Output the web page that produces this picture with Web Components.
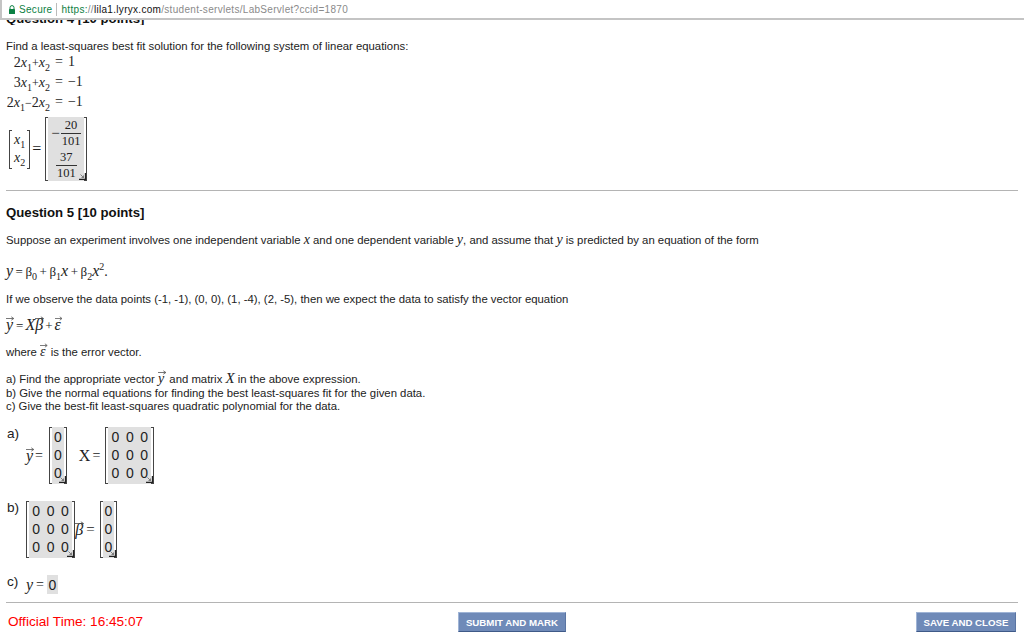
<!DOCTYPE html>
<html>
<head>
<meta charset="utf-8">
<style>
  html, body { margin: 0; padding: 0; background: #fff; }
  body { width: 1024px; height: 640px; overflow: hidden; font-family: "Liberation Sans", Arial, sans-serif; color: #222; }
  i.m, span.m { font-family: "Liberation Serif", serif; font-size: 14px; color: #222; }
  i.m { font-style: italic; }
  i.big { font-size: 16px; }
  span.n { font-size: 13px; }
  span.s { font-size: 12px; }
  span.op { margin: 0 2.5px; }
  sub, sup { font-size: 10px; line-height: 0; font-family: "Liberation Serif", serif; }
</style>
</head>
<body>
<quiz-page>
  <browser-bar></browser-bar>

  <clip-top><quiz-heading style="margin-top:-9px">Question 4 [10 points]</quiz-heading></clip-top>
  <quiz-text style="margin-top:14px">Find a least-squares best fit solution for the following system of linear equations:</quiz-text>
  <eq-system style="margin-top:-1px">
    <span class="r"><span class="m">2</span><i class="m">x</i><sub>1</sub><span class="m s">+</span><i class="m">x</i><sub>2</sub></span><span class="m">=</span><span class="m">1</span>
    <span class="r"><span class="m">3</span><i class="m">x</i><sub>1</sub><span class="m s">+</span><i class="m">x</i><sub>2</sub></span><span class="m">=</span><span class="m">−1</span>
    <span class="r"><span class="m">2</span><i class="m">x</i><sub>1</sub><span class="m s">−</span><span class="m">2</span><i class="m">x</i><sub>2</sub></span><span class="m">=</span><span class="m">−1</span>
  </eq-system>
  <math-row style="margin:5px 0 0 3px">
    <math-matrix plain rowh="18">
      <span><i class="m">x</i><sub>1</sub></span>
      <span><i class="m">x</i><sub>2</sub></span>
    </math-matrix>
    <span class="m" style="font-size:16px;margin:0 4px 0 2px">=</span>
    <math-matrix rowh="30.5" pad="3">
      <span style="display:flex;align-items:center"><span class="m" style="font-size:15px;margin-right:1px">−</span><math-frac><span slot="top">20</span><span slot="bottom">101</span></math-frac></span>
      <span><math-frac><span slot="top">37</span><span slot="bottom">101</span></math-frac></span>
    </math-matrix>
  </math-row>
  <quiz-rule style="margin-top:9px"></quiz-rule>

  <quiz-heading style="margin-top:14px">Question 5 [10 points]</quiz-heading>
  <quiz-text style="margin-top:12px">Suppose an experiment involves one independent variable <i class="m">x</i> and one dependent variable <i class="m">y</i>, and assume that <i class="m">y</i> is predicted by an equation of the form</quiz-text>
  <math-line style="margin-top:16px"><i class="m big">y</i><span class="m n op">=</span><span class="m n">β<sub>0</sub></span><span class="m n op">+</span><span class="m n">β<sub>1</sub></span><i class="m big">x</i><span class="m n op">+</span><span class="m n">β<sub>2</sub></span><i class="m big">x</i><sup>2</sup><span class="m">.</span></math-line>
  <quiz-text style="margin-top:13px">If we observe the data points (-1, -1), (0, 0), (1, -4), (2, -5), then we expect the data to satisfy the vector equation</quiz-text>
  <math-line style="margin-top:11px"><math-vec>y</math-vec><span class="m n" style="margin:0 2px">=</span><i class="m big">X</i><math-vec>β</math-vec><span class="m n" style="margin:0 2px 0 1px">+</span><math-vec>ε</math-vec></math-line>
  <quiz-text style="margin-top:11px">where <math-vec small>ε</math-vec> is the error vector.</quiz-text>
  <quiz-text style="margin-top:11px;line-height:13px">a) Find the appropriate vector <math-vec small>y</math-vec> and matrix <i class="m" style="font-size:15px">X</i> in the above expression.<br>b) Give the normal equations for finding the best least-squares fit for the given data.<br>c) Give the best-fit least-squares quadratic polynomial for the data.</quiz-text>

  <answer-part label="a)" style="margin-top:14px">
    <math-row>
      <math-vec>y</math-vec><span class="m" style="margin:0 6px 0 1px">=</span>
      <math-matrix><span>0</span><span>0</span><span>0</span></math-matrix>
      <span class="m" style="font-size:16px;margin-left:12px">X</span><span class="m" style="margin:0 5px 0 2px">=</span>
      <math-matrix cols="3"><span>0</span><span>0</span><span>0</span><span>0</span><span>0</span><span>0</span><span>0</span><span>0</span><span>0</span></math-matrix>
    </math-row>
  </answer-part>
  <answer-part label="b)" style="margin-top:17px">
    <math-row>
      <math-matrix cols="3"><span>0</span><span>0</span><span>0</span><span>0</span><span>0</span><span>0</span><span>0</span><span>0</span><span>0</span></math-matrix>
      <math-vec>β</math-vec><span class="m" style="margin:0 5px 0 2px;font-size:15px">=</span>
      <math-matrix><span>0</span><span>0</span><span>0</span></math-matrix>
    </math-row>
  </answer-part>
  <answer-part label="c)" style="margin-top:17px">
    <math-row style="height:19px">
      <i class="m big">y</i><span class="m" style="margin:0 3px 0 3px">=</span><answer-box>0</answer-box>
    </math-row>
  </answer-part>

  <quiz-rule style="margin-top:8px"></quiz-rule>
  <quiz-footer time="16:45:07"></quiz-footer>
</quiz-page>

<script>
function define(name, css, html, extra) {
  const template = document.createElement('template');
  template.innerHTML = `<style>${css}</style>${html}`;
  class Comp extends HTMLElement {
    constructor() {
      super();
      this.attachShadow({ mode: 'open' });
      this.shadowRoot.appendChild(template.content.cloneNode(true));
    }
    connectedCallback() {
      if (extra) extra(this);
    }
  }
  customElements.define(name, Comp);
}

define('quiz-page', `
  :host { display: block; height: 640px; overflow: hidden; padding: 0 6px; box-sizing: border-box; }
`, `<slot></slot>`);

define('browser-bar', `
  :host {
    margin: 0 -6px; height: 20px; box-sizing: border-box;
    background: #fff; border: 0 solid #c4c4c4; border-width: 0 0 2px 2px;
    display: flex; align-items: center; padding-left: 6px;
    font: 10px "Liberation Sans", Arial, sans-serif; letter-spacing: .3px; color: #8a8a8a;
  }
  svg { margin-right: 3px; }
  .secure { color: #0b8043; }
  .sep { width: 1px; height: 13px; background: #bbb; margin: 0 5px 0 3px; }
  .host { color: #111; }
`, `
  <svg width="8" height="9" viewBox="0 0 8 9"><path d="M2 4V2.6a2 2 0 0 1 4 0V4" fill="none" stroke="#0b8043" stroke-width="1"/><rect x="1" y="4" width="6" height="5" rx=".5" fill="#0b8043"/></svg>
  <span class="secure">Secure</span><span class="sep"></span>
  <span><span class="secure">https:</span>//<span class="host">lila1.lyryx.com</span>/student-servlets/LabServlet?ccid=1870</span>
`);

// the question above is scrolled away, only its lower edge shows under the bar
define('clip-top', `
  :host { display: block; height: 5px; overflow: hidden; }
`, `<slot></slot>`);

define('quiz-heading', `
  :host { display: block; font: bold 13.2px/16px "Liberation Sans", Arial, sans-serif; color: #111; }
`, `<slot></slot>`);

define('quiz-text', `
  :host { display: block; font: 11.35px/14px "Liberation Sans", Arial, sans-serif; color: #222; }
`, `<slot></slot>`);

define('quiz-rule', `
  :host { display: block; height: 1px; background: #b4b4b4; }
`, ``);

define('math-line', `
  :host { display: block; line-height: 16px; height: 16px; white-space: nowrap; }
`, `<slot></slot>`);

define('math-row', `
  :host { display: flex; align-items: center; }
`, `<slot></slot>`);

define('eq-system', `
  :host { display: grid; grid-template-columns: 42px auto auto; grid-auto-rows: 20px; align-items: center; column-gap: 5px; padding-left: 2px; justify-content: start; }
  ::slotted(.r) { justify-self: end; white-space: nowrap; }
`, `<slot></slot>`);

define('math-frac', `
  :host { display: inline-flex; flex-direction: column; align-items: stretch; text-align: center; font: 12.5px/14px "Liberation Serif", serif; color: #222; }
  .top { border-bottom: 1px solid #333; padding: 0 0 1px; }
  .bottom { padding: 0 1px; }
`, `<div class="top"><slot name="top"></slot></div><div class="bottom"><slot name="bottom"></slot></div>`);

define('math-vec', `
  :host { display: inline-block; position: relative; font: italic 16px/16px "Liberation Serif", serif; color: #222; padding-right: 1px; }
  :host([small]) { font-size: 14px; padding-right: 2px; }
  svg { position: absolute; left: 0; top: -1px; width: 100%; height: 5px; }
`, `<slot></slot><svg viewBox="0 0 10 5" preserveAspectRatio="none"><path d="M0 2.5H9M6.5 .8L9.6 2.5L6.5 4.2" fill="none" stroke="#444" stroke-width=".8"/></svg>`);

define('math-matrix', `
  :host { display: inline-flex; align-items: stretch; position: relative; }
  .br { width: 3px; box-sizing: border-box; border: 1px solid #444; flex: none; }
  .l { border-right: 0; }
  .r { border-left: 0; }
  .body { background: #e0e0e0; display: grid; grid-auto-rows: 18px; align-items: center; justify-items: center; font: 14px/18px "Liberation Sans", Arial, sans-serif; color: #222; padding: 1px 0 2px; }
  :host([plain]) .body { background: none; }
  svg { position: absolute; right: 1px; bottom: 1px; }
  :host([plain]) svg { display: none; }
`, `
  <div class="br l"></div>
  <div class="body"><slot></slot></div>
  <div class="br r"></div>
  <svg width="7" height="7" viewBox="0 0 7 7"><path d="M6.5 0V6.5H0" fill="none" stroke="#222" stroke-width="1.4"/><path d="M1.5 1.5L4.5 4.5M4.5 2.5V4.5H2.5" fill="none" stroke="#555" stroke-width=".7"/></svg>
`, el => {
  const body = el.shadowRoot.querySelector('.body');
  const cols = +el.getAttribute('cols') || 1;
  body.style.gridTemplateColumns = `repeat(${cols}, ${cols > 1 ? '14.4px' : 'auto'})`;
  if (cols === 1) body.style.padding = `1px ${el.getAttribute('pad') || 2}px 2px`;
  if (el.hasAttribute('rowh')) body.style.gridAutoRows = el.getAttribute('rowh') + 'px';
});

define('answer-box', `
  :host { display: flex; align-items: center; justify-content: center; width: 11px; height: 19px; background: #e0e0e0; font: 14px "Liberation Sans", Arial, sans-serif; color: #222; }
`, `<slot></slot>`);

define('answer-part', `
  :host { display: flex; align-items: flex-start; }
  .label { font: 13.6px/16px "Liberation Sans", Arial, sans-serif; color: #222; width: 20px; padding-left: 1px; box-sizing: border-box; margin-top: -1px; }
`, `<span class="label"></span><div class="math"><slot></slot></div>`, el => {
  el.shadowRoot.querySelector('.label').textContent = el.getAttribute('label');
});

define('action-button', `
  :host {
    display: inline-flex; align-items: center; height: 20px; box-sizing: border-box; padding: 0 6.5px;
    background: #6f8ab8; border-top: 1px solid #9fb4d6; border-left: 1px solid #9fb4d6; border-bottom: 1px solid #3f5a88; border-right: 1px solid #5a75a3;
    color: #fff; font: bold 9.7px "Liberation Sans", Arial, sans-serif; white-space: nowrap;
  }
`, `<slot></slot>`);

define('quiz-footer', `
  :host { display: grid; grid-template-columns: 1fr auto 1fr; align-items: center; margin-top: 9px; padding: 0 2px; }
  .time { color: #f00; font: 13.6px "Liberation Sans", Arial, sans-serif; padding-bottom: 2px; }
  .save { justify-self: end; }
`, `
  <span class="time"></span>
  <action-button>SUBMIT AND MARK</action-button>
  <action-button class="save">SAVE AND CLOSE</action-button>
`, el => {
  el.shadowRoot.querySelector('.time').textContent = 'Official Time: ' + el.getAttribute('time');
});
</script>
</body>
</html>
